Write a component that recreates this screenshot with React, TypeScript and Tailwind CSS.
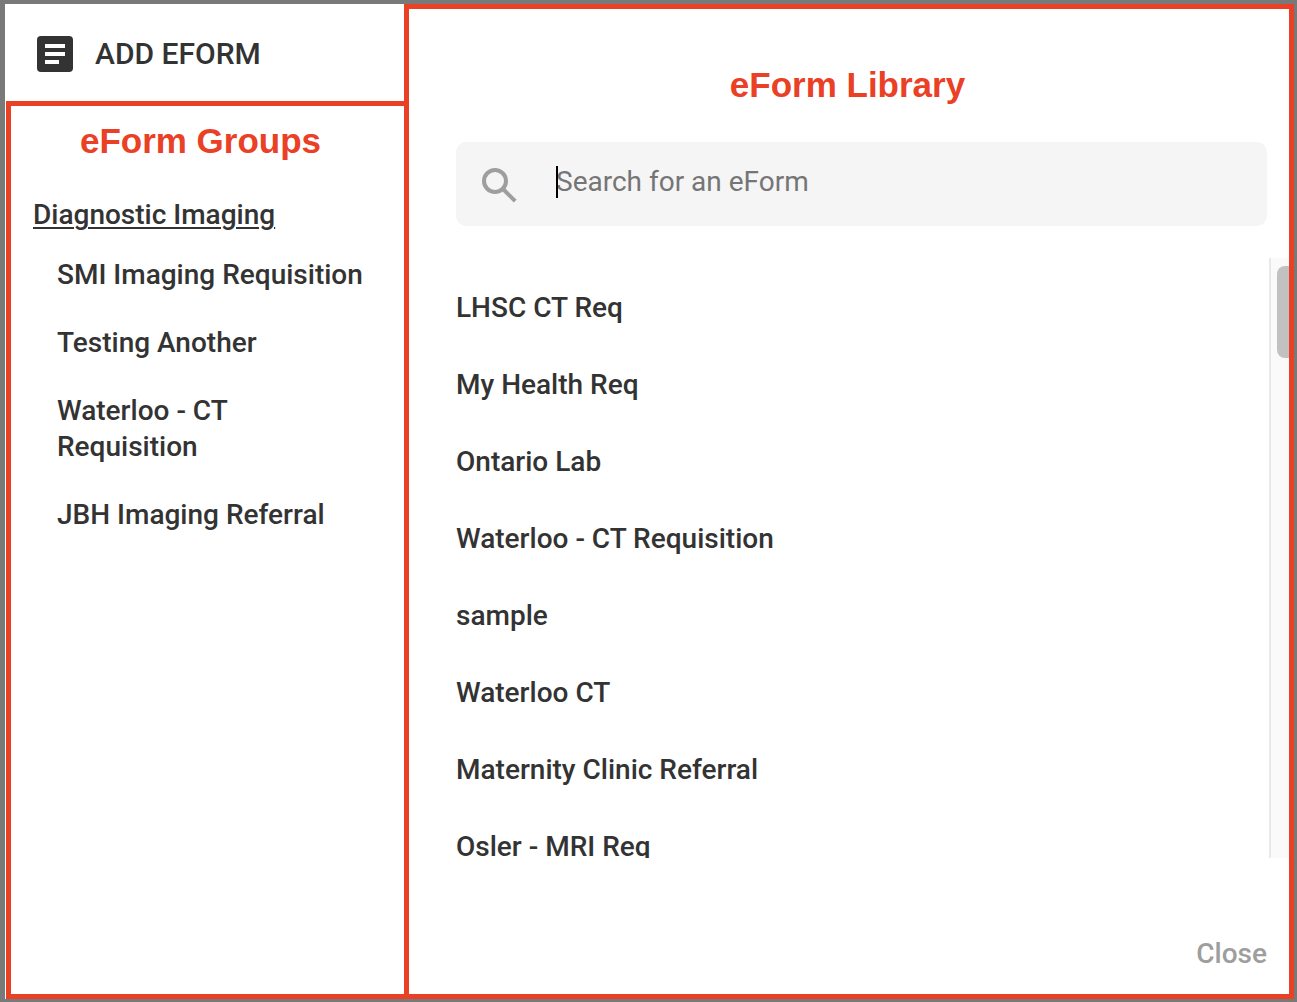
const groups = [
  {
    name: "Diagnostic Imaging",
    forms: [
      "SMI Imaging Requisition",
      "Testing Another",
      "Waterloo - CT Requisition",
      "JBH Imaging Referral",
    ],
  },
];

const library = [
  "LHSC CT Req",
  "My Health Req",
  "Ontario Lab",
  "Waterloo - CT Requisition",
  "sample",
  "Waterloo CT",
  "Maternity Clinic Referral",
  "Osler - MRI Req",
];

function FormIcon() {
  return (
    <svg viewBox="0 0 36 36" className="size-9 shrink-0" aria-hidden="true">
      <rect width="36" height="36" rx="4" fill="#333333" />
      <path d="M8 8h20v4H8zM8 16h20v4H8zM8 24h14v4H8z" fill="#ffffff" />
    </svg>
  );
}

function SearchIcon() {
  return (
    <svg viewBox="0 0 38 38" className="size-[38px] shrink-0" fill="none" stroke="#9e9e9e" aria-hidden="true">
      <circle cx="15" cy="15" r="11" strokeWidth="4" />
      <path d="M23.5 23.5 35.2 35.2" strokeWidth="4" />
    </svg>
  );
}

function GroupsPanel() {
  return (
    <section className="ml-px flex-1 border-5 border-r-0 border-[#ea4025] pt-3 pr-9 pl-[22px]">
      <h2 className="text-center font-['Liberation_Sans',sans-serif] text-[35px] leading-[46px] font-bold text-[#ea4025]">
        eForm Groups
      </h2>
      {groups.map((group) => (
        <div key={group.name} className="mt-[33px]">
          <button type="button" className="block leading-9 underline underline-offset-3 decoration-2">
            {group.name}
          </button>
          <ul className="mt-6 flex flex-col gap-8 pl-6">
            {group.forms.map((form) => (
              <li key={form}>
                <button type="button" className="block text-left leading-9">
                  {form}
                </button>
              </li>
            ))}
          </ul>
        </div>
      ))}
    </section>
  );
}

function LibraryPanel() {
  return (
    <main className="flex min-w-0 flex-1 flex-col border-5 border-[#ea4025] pl-[47px]">
      <h2 className="pt-[53px] pr-[50px] text-center font-['Liberation_Sans',sans-serif] text-[35px] leading-[46px] font-bold text-[#ea4025]">
        eForm Library
      </h2>
      <div className="mt-[34px] mr-[22px] flex h-21 shrink-0 items-center rounded-[10px] bg-[#f5f5f5] pl-6">
        <label htmlFor="eform-search" className="pt-0.5">
          <SearchIcon />
        </label>
        <div className="relative ml-[38px] flex-1 pb-1">
          <input
            id="eform-search"
            type="text"
            aria-label="Search for an eForm"
            placeholder="Search for an eForm"
            className="block w-full bg-transparent leading-8 font-normal caret-transparent outline-none placeholder:text-[#757575]"
          />
          <span className="absolute top-0 left-0 h-8 w-0.5 bg-black" />
        </div>
      </div>
      <div className="mt-8 flex min-h-0 flex-1">
        <ul className="flex min-w-0 flex-1 flex-col gap-[41px] overflow-hidden pt-8">
          {library.map((form) => (
            <li key={form}>
              <button type="button" className="block text-left leading-9">
                {form}
              </button>
            </li>
          ))}
        </ul>
        <div className="w-5 shrink-0 border-l-2 border-[#e8e8e8] bg-[#fafafa] pt-2 pl-1.5">
          <div className="h-[92px] rounded-l-lg bg-[#c1c1c1]" />
        </div>
      </div>
      <div className="flex shrink-0 justify-end pt-[78px] pr-[22px] pb-[22px]">
        <button type="button" className="leading-9 text-[#9e9e9e]">
          Close
        </button>
      </div>
    </main>
  );
}

export default function App() {
  return (
    <div className="flex h-screen bg-[#797979] pt-1 pr-[3px] pb-[3px] pl-[5px] font-[Roboto,sans-serif] text-[28px] font-medium text-[#333333]">
      <div className="flex min-w-0 flex-1 bg-white">
        <aside className="flex w-[399px] shrink-0 flex-col">
          <header className="flex items-center gap-[22px] px-8 pt-7 pb-[25px]">
            <FormIcon />
            <h1 className="text-[30px] leading-11">ADD EFORM</h1>
          </header>
          <GroupsPanel />
        </aside>
        <LibraryPanel />
      </div>
    </div>
  );
}
